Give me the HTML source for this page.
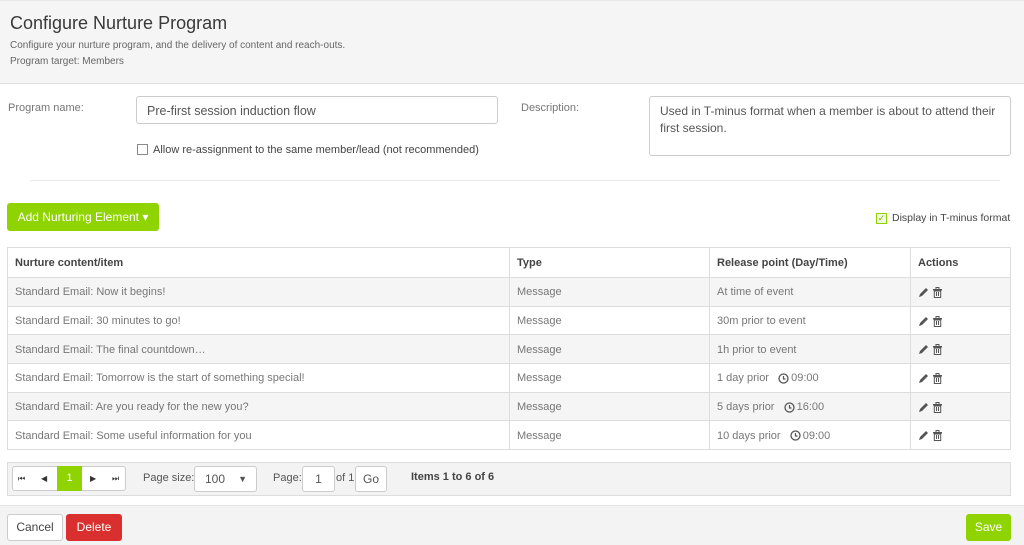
<!DOCTYPE html>
<html><head><style>
*{box-sizing:border-box;margin:0;padding:0}
body{width:1024px;height:545px;overflow:hidden;font-family:"Liberation Sans",sans-serif;background:#fff;color:#555;position:relative}
.hdr{position:absolute;left:0;top:0;width:1024px;height:84px;background:#f5f5f5;border-bottom:1px solid #e0e0e0;border-top:1px solid #e8e8e8}
.abs{position:absolute}
h1{position:absolute;left:10px;top:13px;font-size:18px;font-weight:normal;color:#3a3a3a}
.sm{font-size:10px;color:#666}
.inp{position:absolute;border:1px solid #ccc;border-radius:3px;background:#fff;font-size:12.5px;color:#555}
table{position:absolute;left:7px;top:247px;width:1004px;border-collapse:collapse;font-size:11px}
td,th{border:1px solid #ddd;padding:1px 7px 0;text-align:left;height:28.7px;color:#777;vertical-align:middle}
th{height:30px;font-weight:bold;color:#444}
tbody tr:nth-child(odd){background:#f5f5f5}
.ic{display:inline-block;vertical-align:middle}
.pg{position:absolute;left:7px;top:462px;width:1004px;height:34px;background:#f3f3f3;border:1px solid #ddd}
.btn{position:absolute;border:1px solid #ccc;border-radius:3px;background:#fff;font-size:12px;text-align:center}
.foot{position:absolute;left:0;top:505px;width:1024px;height:40px;background:#f3f3f3;border-top:1px solid #e5e5e5}
</style></head><body>
<div class="hdr"></div>
<h1>Configure Nurture Program</h1>
<div class="abs sm" style="left:10px;top:40px">Configure your nurture program, and the delivery of content and reach-outs.</div>
<div class="abs sm" style="left:10px;top:56px">Program target: Members</div>

<div class="abs" style="left:8px;top:102px;font-size:11px;color:#777">Program name:</div>
<div class="inp" style="left:136px;top:96px;width:362px;height:28px;padding:7px 10px">Pre-first session induction flow</div>
<div class="abs" style="left:137px;top:144px;width:11px;height:11px;border:1px solid #888;background:#fff"></div>
<div class="abs" style="left:153px;top:144px;font-size:11px;color:#444">Allow re-assignment to the same member/lead (not recommended)</div>
<div class="abs" style="left:521px;top:102px;font-size:11px;color:#777">Description:</div>
<div class="inp" style="left:649px;top:96px;width:362px;height:60px;padding:6px 8px 5px 10px;line-height:17px;font-size:12px">Used in T-minus format when a member is about to attend their<br>first session.</div>
<div class="abs" style="left:30px;top:180px;width:970px;height:1px;background:#e8e8e8"></div>

<div class="abs" style="left:7px;top:203px;width:152px;height:28px;background:#8fd400;border-radius:3px;color:#fff;font-size:12px;line-height:28px;text-align:center">Add Nurturing Element ▾</div>
<div class="abs" style="left:876px;top:213px;width:11px;height:11px;border:1px solid #8fd400;background:#f0fae0;color:#7bc000;font-size:9px;line-height:9px;text-align:center">✓</div>
<div class="abs" style="left:892px;top:212px;font-size:10.5px;color:#444">Display in T-minus format</div>

<table>
<thead><tr><th style="width:502px">Nurture content/item</th><th style="width:200px">Type</th><th style="width:201px">Release point (Day/Time)</th><th>Actions</th></tr></thead>
<tbody>
<tr><td>Standard Email: Now it begins!</td><td>Message</td><td>At time of event</td><td>ACT</td></tr>
<tr><td>Standard Email: 30 minutes to go!</td><td>Message</td><td>30m prior to event</td><td>ACT</td></tr>
<tr><td>Standard Email: The final countdown…</td><td>Message</td><td>1h prior to event</td><td>ACT</td></tr>
<tr><td>Standard Email: Tomorrow is the start of something special!</td><td>Message</td><td>1 day prior &nbsp; CLK09:00</td><td>ACT</td></tr>
<tr><td>Standard Email: Are you ready for the new you?</td><td>Message</td><td>5 days prior &nbsp; CLK16:00</td><td>ACT</td></tr>
<tr><td>Standard Email: Some useful information for you</td><td>Message</td><td>10 days prior &nbsp; CLK09:00</td><td>ACT</td></tr>
</tbody></table>

<div class="pg"></div>
<div class="btn" style="left:12px;top:466px;width:114px;height:25px"></div>
<div class="abs" style="left:12px;top:466px;font-size:8px;color:#333;line-height:25px">
<span style="position:absolute;left:6px">⏮</span><span style="position:absolute;left:29px">◀</span>
<span style="position:absolute;left:45px;top:0;width:25px;height:25px;background:#8fd400;color:#fff;font-size:11px;text-align:center">1</span>
<span style="position:absolute;left:78px">▶</span><span style="position:absolute;left:100px">⏭</span></div>
<div class="abs" style="left:143px;top:472px;font-size:11px">Page size:</div>
<div class="btn" style="left:194px;top:466px;width:63px;height:26px;line-height:24px;text-align:left;padding-left:10px">100<span style="position:absolute;right:9px;font-size:9px">▼</span></div>
<div class="abs" style="left:273px;top:472px;font-size:11px">Page:</div>
<div class="btn" style="left:302px;top:466px;width:33px;height:26px;line-height:24px">1</div>
<div class="abs" style="left:336px;top:472px;font-size:11px">of 1</div>
<div class="btn" style="left:355px;top:466px;width:32px;height:26px;line-height:24px">Go</div>
<div class="abs" style="left:411px;top:471px;font-size:11px;font-weight:bold;color:#444">Items 1 to 6 of 6</div>

<div class="foot"></div>
<div class="btn" style="left:7px;top:514px;width:56px;height:27px;line-height:25px;color:#444">Cancel</div>
<div class="abs" style="left:66px;top:514px;width:56px;height:27px;line-height:27px;background:#d9302f;border-radius:3px;color:#fff;font-size:12px;text-align:center">Delete</div>
<div class="abs" style="left:966px;top:514px;width:45px;height:27px;line-height:27px;background:#8fd400;border-radius:3px;color:#fff;font-size:12px;text-align:center">Save</div>

<script>
var act='<svg class="ic" width="11" height="11" viewBox="0 0 11 11"><path d="M1 10 L2 7 L8 1 L10 3 L4 9 Z" fill="#555"/></svg> <svg class="ic" width="11" height="11" viewBox="0 0 11 11"><rect x="1" y="2" width="9" height="1.5" fill="#555"/><rect x="4" y="0.5" width="3" height="2" fill="none" stroke="#555"/><rect x="2.3" y="4" width="6.4" height="6.5" fill="none" stroke="#555"/><path d="M4.5 5v4M6.5 5v4" stroke="#555"/></svg>';
var clk='<svg class="ic" width="11" height="11" viewBox="0 0 11 11" style="margin-right:2px"><circle cx="5.5" cy="5.5" r="4.5" fill="none" stroke="#555" stroke-width="1.3"/><path d="M5.5 3v3h2" fill="none" stroke="#555" stroke-width="1.2"/></svg>';
document.querySelectorAll('td').forEach(function(t){if(t.textContent=='ACT')t.innerHTML=act;else if(t.textContent.indexOf('CLK')>=0)t.innerHTML=t.innerHTML.replace('CLK',clk);});
</script>
</body></html>
